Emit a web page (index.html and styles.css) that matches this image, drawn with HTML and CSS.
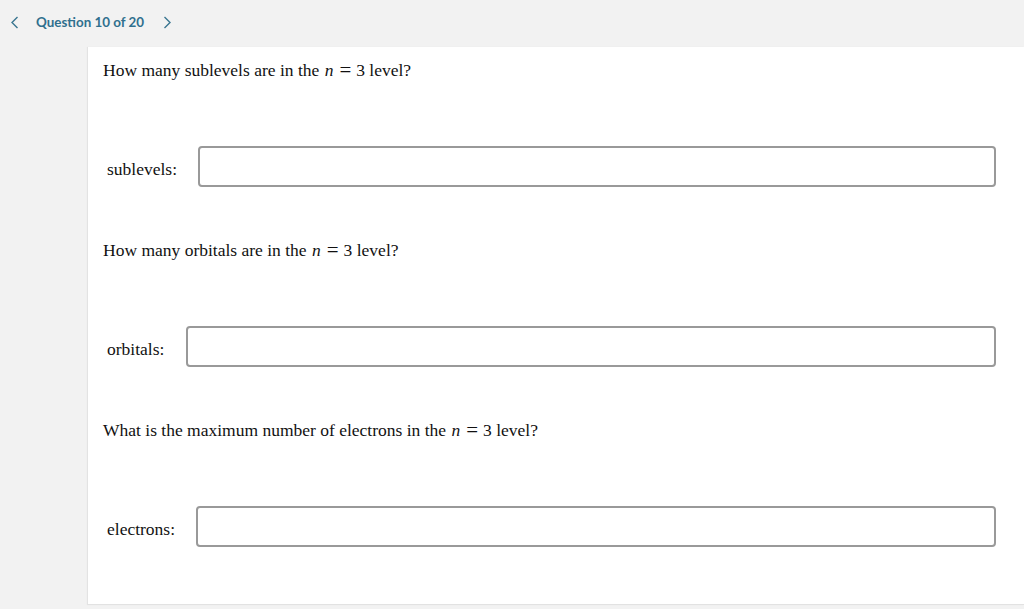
FILE: index.html
```html
<!DOCTYPE html>
<html>
<head>
<meta charset="utf-8">
<link rel="stylesheet" href="styles.css">
</head>
<body>
<header class="topbar">
  <button class="nav-btn nav-prev" aria-label="Previous">
    <svg width="9" height="13" viewBox="0 0 9 13"><path d="M7.5 1 L2 6.5 L7.5 12" fill="none" stroke="#3a7690" stroke-width="1.4"/></svg>
  </button>
  <span class="q-count">Question 10 of 20</span>
  <button class="nav-btn nav-next" aria-label="Next">
    <svg width="9" height="13" viewBox="0 0 9 13"><path d="M1.5 1 L7 6.5 L1.5 12" fill="none" stroke="#3a7690" stroke-width="1.4"/></svg>
  </button>
</header>
<main class="panel">
  <section class="part">
    <p class="question">How many sublevels are in the <span class="math"><i>n</i><span class="eq">=</span>3</span> level?</p>
    <div class="answer-row">
      <label class="answer-label">sublevels:</label>
      <input class="answer-input" type="text">
    </div>
  </section>
  <section class="part">
    <p class="question">How many orbitals are in the <span class="math"><i>n</i><span class="eq">=</span>3</span> level?</p>
    <div class="answer-row">
      <label class="answer-label label-tight">orbitals:</label>
      <input class="answer-input" type="text">
    </div>
  </section>
  <section class="part">
    <p class="question">What is the maximum number of electrons in the <span class="math"><i>n</i><span class="eq">=</span>3</span> level?</p>
    <div class="answer-row">
      <label class="answer-label">electrons:</label>
      <input class="answer-input" type="text">
    </div>
  </section>
</main>
</body>
</html>
```
FILE: styles.css
```css
html, body {
  margin: 0;
  padding: 0;
  background: #f2f2f2;
  height: 609px;
  overflow: hidden;
}
.topbar {
  height: 47px;
  display: flex;
  align-items: center;
  box-sizing: border-box;
  padding: 0 0 3px 8px;
}
.nav-btn {
  border: 0;
  background: none;
  padding: 0;
  width: 12px;
  height: 14px;
  display: flex;
  align-items: center;
  justify-content: center;
}
.nav-prev { margin-right: 16px; }
.nav-next { margin-left: 17px; }
.q-count {
  font-family: Lato, "Open Sans", sans-serif;
  font-weight: 700;
  font-size: 13.4px;
  color: #30708e;
}
.panel {
  margin-left: 88px;
  height: 558px;
  background: #fff;
  box-sizing: border-box;
  padding: 13px 28px 0 15px;
  box-shadow: -1px 0 1px rgba(0,0,0,0.06);
  border-bottom: 1px solid #e2e2e2;
  font-family: "Liberation Serif", "Times New Roman", serif;
  font-size: 17.5px;
  color: #111;
}
.question {
  margin: 0 0 66px;
  line-height: 20px;
}
.math i {
  padding-left: 1px;
}
.eq {
  display: inline-block;
  font-size: 21px;
  line-height: 20px;
  vertical-align: top;
  margin: 0 5px 0 6px;
}
.answer-row {
  display: flex;
  align-items: center;
  height: 41px;
  margin-bottom: 53px;
  padding-left: 4px;
}
.answer-label {
  margin-right: 21px;
  padding-top: 5px;
  white-space: nowrap;
}
.label-tight {
  margin-right: 22px;
}
.answer-input {
  flex: 1;
  height: 41px;
  box-sizing: border-box;
  border: 2px solid #999;
  border-radius: 4px;
  background: #fff;
  outline: none;
}
```
